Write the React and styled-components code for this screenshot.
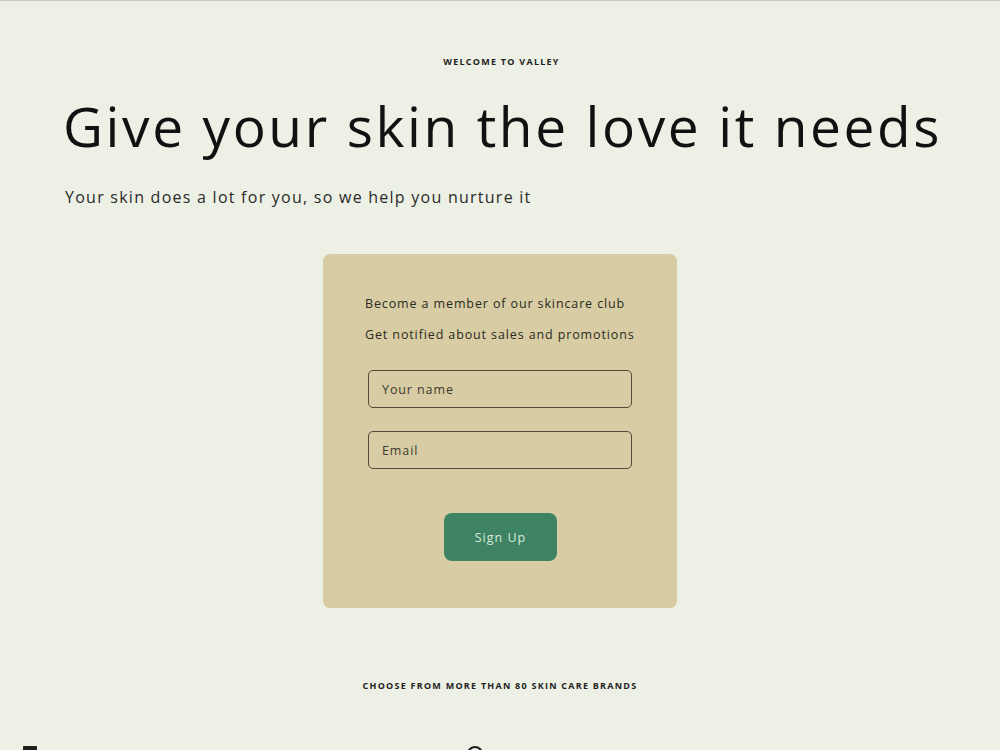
import styled, { createGlobalStyle } from "styled-components"

const GlobalStyle = createGlobalStyle`
  html, body {
    margin: 0;
    padding: 0;
    background: #edf0e5;
  }
  body {
    font-family: "Open Sans", "Liberation Sans", sans-serif;
    color: #1a1a1a;
    overflow: hidden;
  }
`

const Page = styled.div`
  border-top: 1px solid #c5c8bd;
  height: 749px;
  overflow: hidden;
`

const Hero = styled.section`
  padding: 55px 60px 0 63px;
`

const Eyebrow = styled.p`
  margin: 0;
  text-align: center;
  font-size: 9px;
  font-weight: 700;
  letter-spacing: 1.25px;
  color: #222;
  line-height: 12px;
`

const Title = styled.h1`
  margin: 23px 0 0;
  font-size: 55px;
  font-weight: 400;
  letter-spacing: 2.6px;
  line-height: 70px;
  color: #111;
  white-space: nowrap;
`

const Subtitle = styled.p`
  margin: 25px 0 0 2px;
  font-size: 16px;
  letter-spacing: 1.25px;
  line-height: 22px;
  color: #2a2a2a;
`

const CardWrap = styled.div`
  display: flex;
  justify-content: center;
  margin-top: 46px;
`

const Card = styled.div`
  width: 354px;
  height: 354px;
  box-sizing: border-box;
  background: #d7cca3;
  border-radius: 7px;
  padding: 40px 0 0 42px;
`

const CardText = styled.p`
  margin: 0 0 12px;
  font-size: 12.5px;
  letter-spacing: 0.88px;
  line-height: 19px;
  color: #2b2a22;
`

const Form = styled.form`
  display: flex;
  flex-direction: column;
  gap: 23px;
  margin-top: 26px;
  padding-left: 3px;
`

const Input = styled.input`
  width: 264px;
  height: 38px;
  box-sizing: border-box;
  background: transparent;
  border: 1.6px solid #514b3a;
  border-radius: 5px;
  padding: 0 13px;
  font-family: "Open Sans", "Liberation Sans", sans-serif;
  font-size: 12.5px;
  letter-spacing: 0.9px;
  color: #2b2a22;
  outline: none;

  &::placeholder {
    color: #3d3a2e;
  }
`

const Button = styled.button`
  align-self: flex-start;
  margin: 21px 0 0 76px;
  width: 113px;
  height: 48px;
  border: none;
  border-radius: 8px;
  background: #3e8464;
  color: #d9e6dc;
  font-family: "Open Sans", "Liberation Sans", sans-serif;
  font-size: 12.5px;
  letter-spacing: 1px;
  cursor: pointer;
`

const Brands = styled.section`
  margin-top: 72px;
`

const BrandsTitle = styled(Eyebrow)``

const LogoRow = styled.div`
  display: flex;
  align-items: flex-start;
  margin-top: 54px;
  padding-left: 23px;
  gap: 430px;
`

const LogoBlock = styled.div`
  width: 14px;
  height: 10px;
  background: #1e1e1e;
  border-radius: 1px;
`

const LogoRing = styled.div`
  width: 12px;
  height: 12px;
  border: 2px solid #1e1e1e;
  border-radius: 50%;
`

export default function App() {
  return (
    <Page>
      <GlobalStyle />
      <Hero>
        <Eyebrow>WELCOME TO VALLEY</Eyebrow>
        <Title>Give your skin the love it needs</Title>
        <Subtitle>Your skin does a lot for you, so we help you nurture it</Subtitle>
      </Hero>
      <CardWrap>
        <Card>
          <CardText>Become a member of our skincare club</CardText>
          <CardText>Get notified about sales and promotions</CardText>
          <Form onSubmit={e => e.preventDefault()}>
            <Input type="text" placeholder="Your name" />
            <Input type="email" placeholder="Email" />
            <Button type="submit">Sign Up</Button>
          </Form>
        </Card>
      </CardWrap>
      <Brands>
        <BrandsTitle>CHOOSE FROM MORE THAN 80 SKIN CARE BRANDS</BrandsTitle>
        <LogoRow>
          <LogoBlock />
          <LogoRing />
        </LogoRow>
      </Brands>
    </Page>
  )
}
